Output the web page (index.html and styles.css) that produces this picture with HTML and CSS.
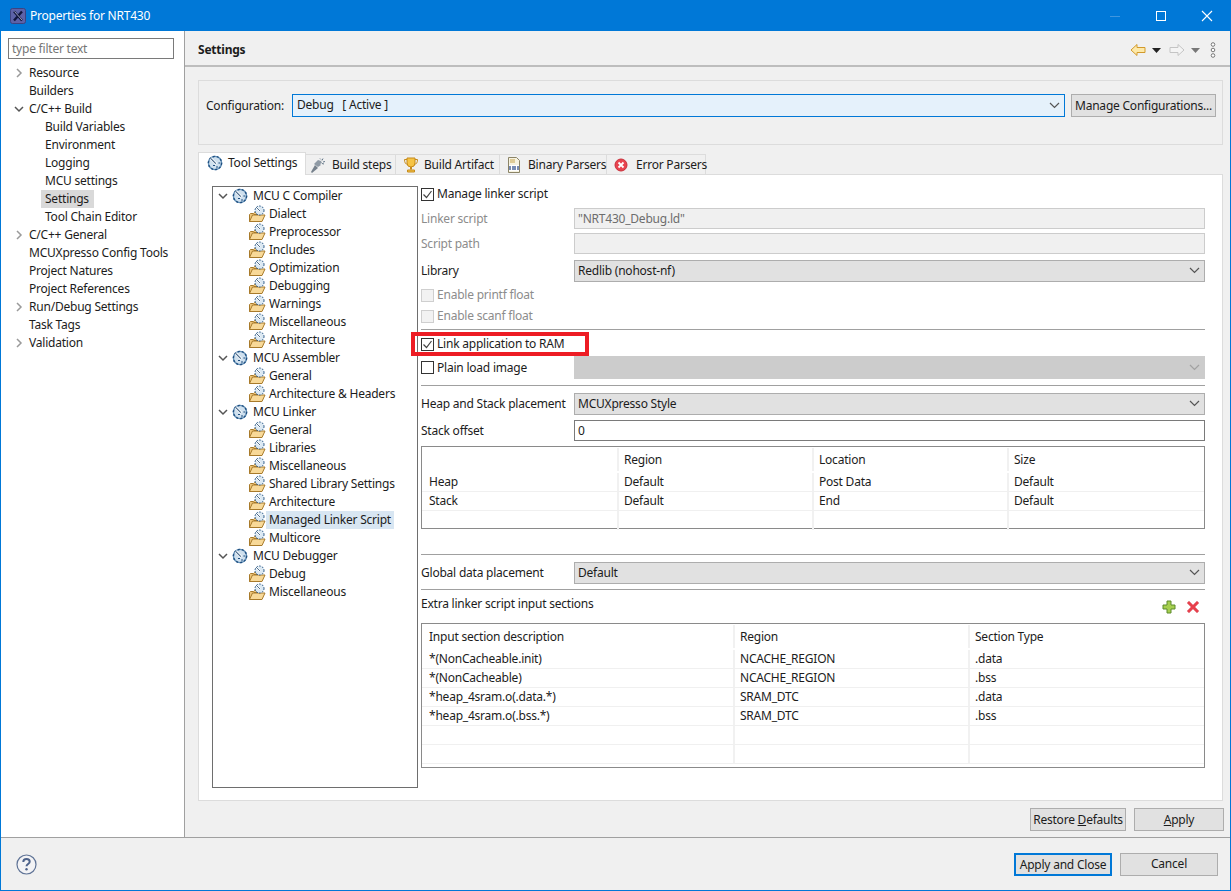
FILE: index.html
```html
<!DOCTYPE html>
<html lang="en">
<head>
<meta charset="utf-8">
<title>Properties for NRT430</title>
<link rel="stylesheet" href="styles.css">
</head>
<body>
<svg class="defs" width="0" height="0" aria-hidden="true">
  <defs>
    <symbol id="tool" viewBox="0 0 16 16">
      <circle cx="8" cy="8" r="6.6" fill="#cfe0ee" stroke="#5f8db5" stroke-width="1.400"/>
      <circle cx="8" cy="8" r="6.6" fill="none" stroke="#1f4f80" stroke-width="1.400" stroke-dasharray="2 2.100"/>
      <path d="M3.400 3.200l5.800 5.800" stroke="#fff" stroke-width="2.600"/>
      <path d="M3.400 3.200l5.400 5.400" stroke="#3f6285" stroke-width="1.100"/>
      <path d="M9 12h2M11.400 8h1.800M6 10.500h2" stroke="#1f4f80" stroke-width="1.100"/>
    </symbol>
    <symbol id="folder" viewBox="0 0 18 18">
      <path d="M1.500 16.500V9.500l1-1h3l1-1h5v2H6l-2.500 7z" fill="#eec67a" stroke="#a87a2a"/>
      <path d="M1.500 16.500l3-6.500h12.500l-3 6.500z" fill="#f8d998" stroke="#a87a2a"/>
      <circle cx="11.500" cy="5.500" r="4.500" fill="#dbe8f2" stroke="#1f4f80" stroke-dasharray="1.600 1.300"/>
      <path d="M8 2l4 4" stroke="#fff" stroke-width="2"/>
      <path d="M8 2l4 4" stroke="#3f6285" stroke-width=".9"/>
    </symbol>
    <symbol id="chev-r" viewBox="0 0 8 10"><path d="M2 1l4 4-4 4" fill="none" stroke="#9a9a9a" stroke-width="1.500"/></symbol>
    <symbol id="chev-d" viewBox="0 0 10 8"><path d="M1 2l4 4 4-4" fill="none" stroke="#555" stroke-width="1.500"/></symbol>
    <symbol id="drop" viewBox="0 0 11 7"><path d="M1 1l4.500 4.500L10 1" fill="none" stroke="#555" stroke-width="1.200"/></symbol>
    <symbol id="check" viewBox="0 0 13 13"><path d="M2.500 6.500l3 3 5-6.500" fill="none" stroke="#444" stroke-width="1.200"/></symbol>
  </defs>
</svg>

<div class="window">
  <header class="titlebar">
    <svg class="app-icon" width="16" height="16" viewBox="0 0 16 16"><rect x=".5" y=".5" width="15" height="15" rx="2" fill="#5c62a8" stroke="#3d4280"/><path d="M4 3.500l8 9M12 3.500l-8 9" stroke="#10163f" stroke-width="2.400"/><path d="M4.500 3.500l7.500 8.500" stroke="#d9dcf2" stroke-width=".7"/></svg>
    <span class="title">Properties for NRT430</span>
    <span class="win-controls">
      <svg width="46" height="30" viewBox="0 0 46 30"><path d="M18 15.500h10" stroke="#3f96df"/></svg>
      <svg width="46" height="30" viewBox="0 0 46 30"><rect x="18.500" y="10.500" width="9" height="9" fill="none" stroke="#fff"/></svg>
      <svg width="46" height="30" viewBox="0 0 46 30"><path d="M18 10l10 10M28 10l-10 10" stroke="#fff" stroke-width="1.100"/></svg>
    </span>
  </header>

  <div class="main">
    <aside class="sidebar">
      <input class="filter" type="text" placeholder="type filter text">
      <ul class="nav">
        <li class="nav-row"><svg class="tw" width="8" height="10"><use href="#chev-r"/></svg>Resource</li>
        <li class="nav-row"><span class="tw"></span>Builders</li>
        <li class="nav-row"><svg class="tw" width="10" height="8"><use href="#chev-d"/></svg>C/C++ Build</li>
        <li class="nav-row sub">Build Variables</li>
        <li class="nav-row sub">Environment</li>
        <li class="nav-row sub">Logging</li>
        <li class="nav-row sub">MCU settings</li>
        <li class="nav-row sub"><span class="nav-sel">Settings</span></li>
        <li class="nav-row sub">Tool Chain Editor</li>
        <li class="nav-row"><svg class="tw" width="8" height="10"><use href="#chev-r"/></svg>C/C++ General</li>
        <li class="nav-row"><span class="tw"></span>MCUXpresso Config Tools</li>
        <li class="nav-row"><span class="tw"></span>Project Natures</li>
        <li class="nav-row"><span class="tw"></span>Project References</li>
        <li class="nav-row"><svg class="tw" width="8" height="10"><use href="#chev-r"/></svg>Run/Debug Settings</li>
        <li class="nav-row"><span class="tw"></span>Task Tags</li>
        <li class="nav-row"><svg class="tw" width="8" height="10"><use href="#chev-r"/></svg>Validation</li>
      </ul>
    </aside>

    <section class="content">
      <div class="content-head">
        <h1 class="page-title">Settings</h1>
        <span class="nav-arrows">
          <svg width="16" height="14" viewBox="0 0 16 14"><path d="M1 7l6-5.500V4.500h8v5H7v3z" fill="#fde9a9" stroke="#d29a2c"/></svg>
          <svg class="caret" width="9" height="5" viewBox="0 0 9 5"><path d="M0 0h9L4.500 5z" fill="#222"/></svg>
          <svg class="fwd" width="16" height="14" viewBox="0 0 16 14"><path d="M15 7L9 1.500V4.500H1v5h8v3z" fill="#f4f4f4" stroke="#c4c4c4"/></svg>
          <svg class="caret" width="9" height="5" viewBox="0 0 9 5"><path d="M0 0h9L4.500 5z" fill="#777"/></svg>
          <svg class="kebab" width="6" height="16" viewBox="0 0 6 16"><g fill="#fff" stroke="#777"><circle cx="3" cy="2.500" r="1.800"/><circle cx="3" cy="8" r="1.800"/><circle cx="3" cy="13.500" r="1.800"/></g></svg>
        </span>
      </div>

      <div class="content-body">
        <div class="config">
          <label class="config-label">Configuration:</label>
          <div class="config-select">Debug &nbsp; [ Active ]<svg class="drop" width="11" height="7"><use href="#drop"/></svg></div>
          <button class="btn manage">Manage Configurations...</button>
        </div>

        <div class="tabs">
          <div class="tab tab-on tab-tool"><svg width="16" height="16"><use href="#tool"/></svg>Tool Settings</div>
          <div class="tab tab-steps"><svg width="16" height="16" viewBox="0 0 16 16"><path d="M1 15l4-7 3 3-6 5z" fill="#76818c"/><path d="M4 7l4-4 3 1 1 2-2 1 1 1-3 2z" fill="#8f9aa5"/><path d="M10 1.500l1 1M13 1.500l-1 2M15 4.500l-2 .5M14 7l-2-.5" stroke="#66788a"/></svg>Build steps</div>
          <div class="tab tab-art"><svg width="16" height="16" viewBox="0 0 16 16"><path d="M4 1h8v5a4 4 0 0 1-8 0z" fill="#f6c445" stroke="#c58a1c"/><path d="M4 2.500H1.500c0 3 1 4.500 3 5M12 2.500h2.500c0 3-1 4.500-3 5" fill="none" stroke="#c58a1c"/><path d="M8 10v2.500" stroke="#c58a1c" stroke-width="2"/><path d="M4.500 13h7v2h-7z" fill="#f6c445" stroke="#c58a1c"/></svg>Build Artifact</div>
          <div class="tab tab-bin"><svg width="14" height="16" viewBox="0 0 14 16"><path d="M1.500 .5h8l3 3v12h-11z" fill="#f6f2df" stroke="#8b8467"/><path d="M3 3h5M3 5h5" stroke="#c6a34e"/><rect x="2" y="8" width="10" height="6" fill="#fff"/><path d="M3 9v4M6 9v4M8 9v4M11 9v4" stroke="#32508a" stroke-width="1.300"/></svg>Binary Parsers</div>
          <div class="tab tab-err"><svg width="14" height="14" viewBox="0 0 14 14"><circle cx="7" cy="7" r="6" fill="#e8444f" stroke="#c92f3a"/><path d="M4.500 4.500l5 5M9.500 4.500l-5 5" stroke="#fff" stroke-width="1.800"/></svg>Error Parsers</div>
        </div>

        <div class="tab-panel">
          <ul class="tool-tree">
            <li class="tt-row"><svg class="tt-tw" width="10" height="8"><use href="#chev-d"/></svg><svg class="tt-ic" width="16" height="16"><use href="#tool"/></svg>MCU C Compiler</li>
            <li class="tt-row tt-sub"><svg class="tt-f" width="18" height="18"><use href="#folder"/></svg>Dialect</li>
            <li class="tt-row tt-sub"><svg class="tt-f" width="18" height="18"><use href="#folder"/></svg>Preprocessor</li>
            <li class="tt-row tt-sub"><svg class="tt-f" width="18" height="18"><use href="#folder"/></svg>Includes</li>
            <li class="tt-row tt-sub"><svg class="tt-f" width="18" height="18"><use href="#folder"/></svg>Optimization</li>
            <li class="tt-row tt-sub"><svg class="tt-f" width="18" height="18"><use href="#folder"/></svg>Debugging</li>
            <li class="tt-row tt-sub"><svg class="tt-f" width="18" height="18"><use href="#folder"/></svg>Warnings</li>
            <li class="tt-row tt-sub"><svg class="tt-f" width="18" height="18"><use href="#folder"/></svg>Miscellaneous</li>
            <li class="tt-row tt-sub"><svg class="tt-f" width="18" height="18"><use href="#folder"/></svg>Architecture</li>
            <li class="tt-row"><svg class="tt-tw" width="10" height="8"><use href="#chev-d"/></svg><svg class="tt-ic" width="16" height="16"><use href="#tool"/></svg>MCU Assembler</li>
            <li class="tt-row tt-sub"><svg class="tt-f" width="18" height="18"><use href="#folder"/></svg>General</li>
            <li class="tt-row tt-sub"><svg class="tt-f" width="18" height="18"><use href="#folder"/></svg>Architecture &amp; Headers</li>
            <li class="tt-row"><svg class="tt-tw" width="10" height="8"><use href="#chev-d"/></svg><svg class="tt-ic" width="16" height="16"><use href="#tool"/></svg>MCU Linker</li>
            <li class="tt-row tt-sub"><svg class="tt-f" width="18" height="18"><use href="#folder"/></svg>General</li>
            <li class="tt-row tt-sub"><svg class="tt-f" width="18" height="18"><use href="#folder"/></svg>Libraries</li>
            <li class="tt-row tt-sub"><svg class="tt-f" width="18" height="18"><use href="#folder"/></svg>Miscellaneous</li>
            <li class="tt-row tt-sub"><svg class="tt-f" width="18" height="18"><use href="#folder"/></svg>Shared Library Settings</li>
            <li class="tt-row tt-sub"><svg class="tt-f" width="18" height="18"><use href="#folder"/></svg>Architecture</li>
            <li class="tt-row tt-sub"><svg class="tt-f" width="18" height="18"><use href="#folder"/></svg><span class="tt-sel">Managed Linker Script</span></li>
            <li class="tt-row tt-sub"><svg class="tt-f" width="18" height="18"><use href="#folder"/></svg>Multicore</li>
            <li class="tt-row"><svg class="tt-tw" width="10" height="8"><use href="#chev-d"/></svg><svg class="tt-ic" width="16" height="16"><use href="#tool"/></svg>MCU Debugger</li>
            <li class="tt-row tt-sub"><svg class="tt-f" width="18" height="18"><use href="#folder"/></svg>Debug</li>
            <li class="tt-row tt-sub"><svg class="tt-f" width="18" height="18"><use href="#folder"/></svg>Miscellaneous</li>
          </ul>

          <div class="form">
            <div class="chk-row r-manage"><span class="chk"><svg width="13" height="13"><use href="#check"/></svg></span>Manage linker script</div>
            <div class="f-row r-ls"><span class="lbl dim">Linker script</span><div class="field disabled">"NRT430_Debug.ld"</div></div>
            <div class="f-row r-sp"><span class="lbl dim">Script path</span><div class="field disabled"></div></div>
            <div class="f-row r-lib"><span class="lbl">Library</span><div class="sel">Redlib (nohost-nf)<svg class="drop" width="11" height="7"><use href="#drop"/></svg></div></div>
            <div class="chk-row dim r-pf"><span class="chk chk-dis"></span>Enable printf float</div>
            <div class="chk-row dim r-sf"><span class="chk chk-dis"></span>Enable scanf float</div>
            <hr class="sep s1">
            <div class="chk-row r-ram"><span class="chk"><svg width="13" height="13"><use href="#check"/></svg></span>Link application to RAM<span class="callout"></span></div>
            <div class="f-row r-plain"><span class="lbl lbl-chk"><span class="chk"></span>Plain load image</span><div class="sel sel-dis"><svg class="drop" width="11" height="7"><use href="#drop"/></svg></div></div>
            <hr class="sep s2">
            <div class="f-row r-heap"><span class="lbl">Heap and Stack placement</span><div class="sel">MCUXpresso Style<svg class="drop" width="11" height="7"><use href="#drop"/></svg></div></div>
            <div class="f-row r-off"><span class="lbl">Stack offset</span><div class="field">0</div></div>

            <div class="tbl tbl-heap">
              <div class="t-head"><span></span><span>Region</span><span>Location</span><span>Size</span></div>
              <div class="t-row"><span>Heap</span><span>Default</span><span>Post Data</span><span>Default</span></div>
              <div class="t-row"><span>Stack</span><span>Default</span><span>End</span><span>Default</span></div>
              <div class="t-row t-last"><span></span><span></span><span></span><span></span></div>
            </div>

            <hr class="sep s3">
            <div class="f-row r-glob"><span class="lbl">Global data placement</span><div class="sel">Default<svg class="drop" width="11" height="7"><use href="#drop"/></svg></div></div>
            <hr class="sep s4">
            <div class="extra-head"><span>Extra linker script input sections</span>
              <span class="extra-ic">
                <svg width="14" height="14" viewBox="0 0 14 14"><path d="M5 1h4v4h4v4H9v4H5V9H1V5h4z" fill="#a6cf4f" stroke="#5d8a2c"/></svg>
                <svg width="14" height="14" viewBox="0 0 14 14"><path d="M3 1l4 4 4-4 2 2-4 4 4 4-2 2-4-4-4 4-2-2 4-4-4-4z" fill="#e8404c" stroke="#e28089" stroke-width=".6"/></svg>
              </span>
            </div>
            <div class="tbl tbl-extra">
              <div class="t-head"><span>Input section description</span><span>Region</span><span>Section Type</span></div>
              <div class="t-row"><span>*(NonCacheable.init)</span><span>NCACHE_REGION</span><span>.data</span></div>
              <div class="t-row"><span>*(NonCacheable)</span><span>NCACHE_REGION</span><span>.bss</span></div>
              <div class="t-row"><span>*heap_4sram.o(.data.*)</span><span>SRAM_DTC</span><span>.data</span></div>
              <div class="t-row"><span>*heap_4sram.o(.bss.*)</span><span>SRAM_DTC</span><span>.bss</span></div>
              <div class="t-row"><span></span><span></span><span></span></div>
              <div class="t-row"><span></span><span></span><span></span></div>
            </div>
          </div>
        </div>

        <div class="page-actions">
          <button class="btn restore">Restore <u>D</u>efaults</button>
          <button class="btn apply"><u>A</u>pply</button>
        </div>
      </div>
    </section>
  </div>

  <footer class="footer">
    <svg class="help" width="21" height="21" viewBox="0 0 21 21"><circle cx="10.500" cy="10.500" r="9.500" fill="#f3f3f5" stroke="#5f7396" stroke-width="1.200"/><path d="M7.300 8c0-2 1.400-3 3.200-3s3.200 1 3.200 2.700c0 2.300-3.200 2.300-3.200 4.500" fill="none" stroke="#4d628a" stroke-width="2"/><circle cx="10.500" cy="15.300" r="1.200" fill="#4d628a"/></svg>
    <span class="footer-btns">
      <button class="btn default">Apply and Close</button>
      <button class="btn cancel">Cancel</button>
    </span>
  </footer>
</div>
</body>
</html>
```

FILE: styles.css
```css
* { box-sizing: border-box; }
html, body { margin: 0; padding: 0; }
body {
  width: 1231px; height: 891px; overflow: hidden;
  font: 12px/18px "Noto Sans", "Noto Sans CJK KR", sans-serif;
  letter-spacing: -0.22px;
  color: #1c1c1c; background: #f0f0f0;
}
.defs { position: absolute; }
ul { list-style: none; margin: 0; padding: 0; }
.window { width: 1231px; height: 891px; display: flex; flex-direction: column; border: 1px solid #0078d7; border-top: 0; background: #f0f0f0; }

.titlebar { height: 31px; flex: none; background: #0078d7; color: #fff; display: flex; align-items: center; padding-left: 9px; }
.app-icon { margin-right: 4px; }
.title { font-size: 12px; flex: 1; }
.win-controls { display: flex; }
.win-controls svg { display: block; }

.main { flex: 1; display: flex; min-height: 0; }
.sidebar { width: 184px; flex: none; background: #fff; border-right: 1px solid #a0a0a0; padding: 7px 0 0 7px; }
.filter { display: block; width: 166px; height: 21px; border: 1px solid #7a7a7a; padding: 0 3px; font: inherit; letter-spacing: inherit; outline: 0; margin-bottom: 5px; }
.filter::placeholder { color: #767676; opacity: 1; }
.nav-row { height: 18px; display: flex; align-items: center; white-space: nowrap; }
.tw { width: 10px; margin: 0 5px 0 6px; flex: none; }
.sub { padding-left: 37px; }
.nav-sel { background: #d9d9d9; padding: 0 5px 0 4px; margin-left: -4px; }

.content { flex: 1; display: flex; flex-direction: column; min-width: 0; }
.content-head { height: 36px; flex: none; display: flex; align-items: center; justify-content: space-between; padding: 4px 14px 0 13px; border-bottom: 2px solid #bdbdbd; }
.page-title { margin: 0; font-size: 12px; font-weight: 700; }
.nav-arrows { display: flex; align-items: center; }
.nav-arrows .caret { margin: 0 7px 0 6px; }
.nav-arrows .fwd { margin-left: 1px; }
.nav-arrows .kebab { margin-left: 3px; }

.content-body { flex: 1; padding: 13px 7px 0 13px; display: flex; flex-direction: column; min-height: 0; }
.config { height: 65px; flex: none; border: 1px solid #dcdcdc; display: flex; align-items: flex-start; padding: 13px 6px 0 7px; }
.config-label { width: 86px; flex: none; line-height: 24px; }
.config-select { flex: 1; height: 23px; border: 1px solid #0078d7; background: #e5f1fb; padding: 0 4px; line-height: 20px; position: relative; margin-right: 6px; }
.drop { position: absolute; right: 4px; top: 50%; margin-top: -4px; }
.btn { font: inherit; letter-spacing: inherit; color: #1c1c1c; background: #e1e1e1; border: 1px solid #adadad; padding: 0; height: 23px; line-height: 20px; white-space: nowrap; }
.manage { width: 145px; flex: none; }

.tabs { height: 22px; flex: none; display: flex; margin-top: 7px; align-items: flex-end; }
.tab { height: 20px; display: flex; align-items: center; background: #f0f0f0; border: 1px solid #dcdcdc; border-bottom: 0; border-left: 0; white-space: nowrap; }
.tab svg { margin-right: 5px; flex: none; }
.tab-on { background: #fff; height: 23px; border-left: 1px solid #dcdcdc; padding-bottom: 2px; margin-bottom: -1px; position: relative; }
.tab-tool { width: 108px; padding-left: 8px; }
.tab-steps { width: 90px; padding-left: 4px; }
.tab-steps svg { margin-right: 6px; }
.tab-art { width: 104px; padding-left: 7px; }
.tab-art svg { margin-right: 5px; }
.tab-bin { width: 107px; padding-left: 7px; }
.tab-bin svg { margin-right: 7px; }
.tab-err { width: 99px; padding-left: 7px; }
.tab-err svg { margin-right: 8px; }

.tab-panel { height: 627px; flex: none; background: #fff; border: 1px solid #dcdcdc; display: flex; padding: 11px 17px 0 13px; }
.tool-tree { width: 206px; height: 602px; flex: none; border: 1px solid #6e6e6e; margin-right: 3px; }
.tt-row { height: 18px; display: flex; align-items: center; white-space: nowrap; }
.tt-tw { margin-left: 5px; margin-right: 4px; flex: none; }
.tt-ic { margin-right: 5px; flex: none; }
.tt-sub { padding-left: 35px; }
.tt-f { margin-right: 3px; flex: none; }
.tt-sel { background: #d8e6f2; padding: 0 3px; margin-left: -3px; }

.form { flex: 1; min-width: 0; position: relative; }
.dim { color: #8c8c8c; }
.chk-row { display: flex; align-items: center; position: relative; }
.chk { width: 13px; height: 13px; border: 1px solid #333; background: #fff; display: inline-flex; margin-right: 3px; flex: none; }
.chk svg { display: block; margin: -1px; }
.chk-dis { border-color: #cfcfcf; background: #f2f2f2; }
.f-row { display: flex; align-items: center; }
.lbl { width: 153px; flex: none; white-space: nowrap; }
.lbl-chk { display: flex; align-items: center; }
.field { flex: 1; height: 21px; border: 1px solid #7a7a7a; background: #fff; padding: 0 3px; line-height: 19px; }
.field.disabled { background: #f0f0f0; border-color: #cccccc; color: #6d6d6d; }
.sel { flex: 1; height: 22px; border: 1px solid #adadad; background: #e1e1e1; padding: 0 3px; line-height: 20px; position: relative; }
.sel-dis { background: #cccccc; border-color: #cccccc; height: 23px; }
.sel-dis .drop { opacity: .35; }
.sep { border: 0; border-top: 1px solid #a0a0a0; margin: 0; height: 0; }

.r-manage { height: 18px; margin-top: -1px; margin-bottom: 3px; }
.r-ls { height: 21px; margin-top: 5px; }
.r-sp { height: 21px; margin-top: 4px; }
.r-lib { height: 22px; margin-top: 6px; }
.r-pf { height: 18px; margin-top: 4px; }
.r-sf { height: 18px; margin-top: 3px; }
.s1 { margin-top: 4px; }
.r-ram { height: 18px; margin-top: 5px; }
.callout { position: absolute; left: -10px; top: -3px; width: 178px; height: 24px; border: 4px solid #ed1c24; pointer-events: none; }
.r-plain { height: 23px; margin-top: 3px; }
.s2 { margin-top: 6px; }
.r-heap { height: 22px; margin-top: 7px; }
.r-off { height: 21px; margin-top: 5px; }

.tbl { border: 1px solid #8a8a8a; }
.tbl-heap { height: 83px; margin-top: 5px; }
.tbl-heap .t-head, .tbl-heap .t-row { display: grid; grid-template-columns: 195px 195px 195px 1fr; }
.t-head { height: 26px; line-height: 25px; }
.t-head span { padding-left: 5px; border-left: 2px solid #f1f1f1; height: 23px; margin-top: 1px; line-height: 23px; }
.t-head span:first-child { border-left: 0; padding-left: 7px; }
.t-row { height: 19px; border-bottom: 1px solid #f0f0f0; line-height: 18px; }
.t-row span { padding-left: 5px; border-left: 2px solid #f1f1f1; white-space: nowrap; }
.t-row span:first-child { border-left: 0; padding-left: 7px; }
.t-last { border-bottom: 0; }
.s3 { margin-top: 25px; }
.r-glob { height: 22px; margin-top: 7px; }
.s4 { margin-top: 5px; }
.extra-head { height: 33px; display: flex; justify-content: space-between; padding: 5px 5px 0 0; }
.extra-ic { display: flex; gap: 10px; align-items: flex-start; padding-top: 5px; }
.tbl-extra { height: 145px; }
.tbl-extra .t-head, .tbl-extra .t-row { display: grid; grid-template-columns: 311px 235px 1fr; }

.page-actions { height: 37px; flex: none; display: flex; justify-content: flex-end; gap: 8px; padding-top: 7px; margin-right: -1px; }
.restore { width: 96px; }
.apply { width: 90px; }

.footer { height: 53px; flex: none; border-top: 1px solid #a0a0a0; display: flex; align-items: center; justify-content: space-between; padding: 0 12px 0 15px; }
.footer-btns { display: flex; gap: 8px; }
.default { width: 98px; border: 2px solid #0078d7; line-height: 19px; }
.cancel { width: 98px; }
```
